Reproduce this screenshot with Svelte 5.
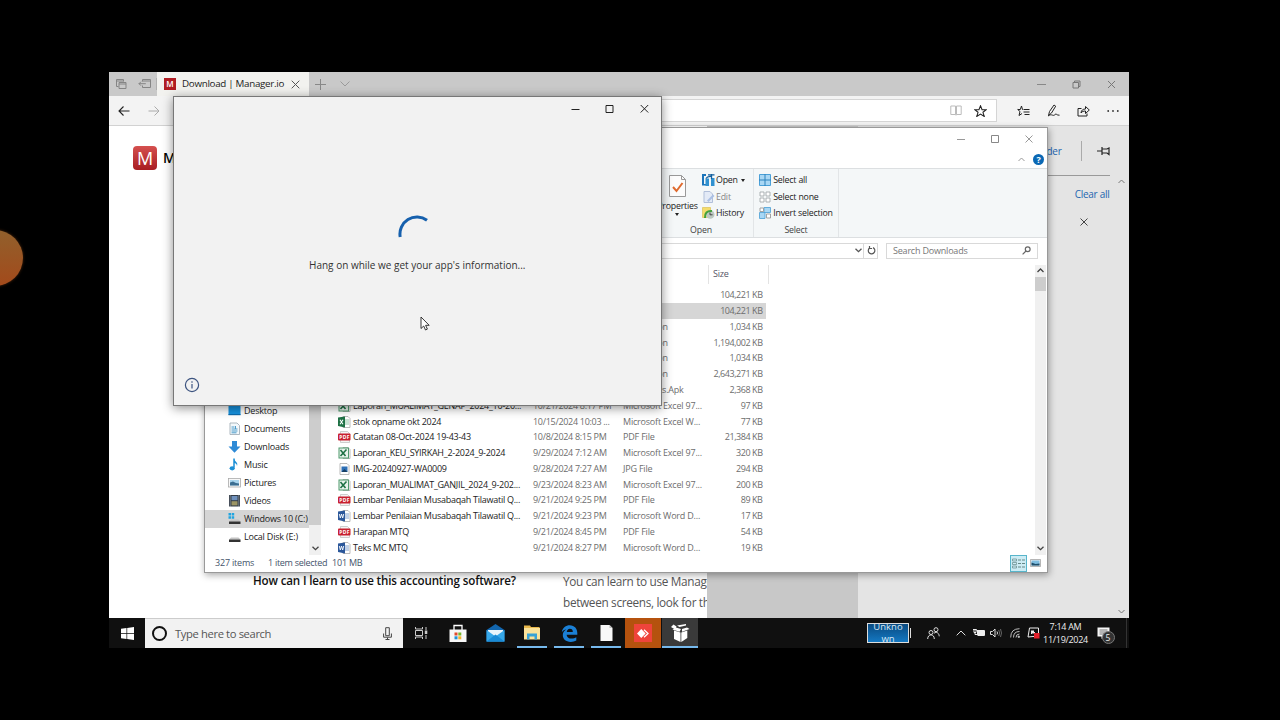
<script lang="ts">
	type FileRow = { name: string; icon: string; date: string; type: string; size: string; selected?: boolean };

	const files: FileRow[] = [
		{ name: '', icon: '', date: '', type: '', size: '104,221 KB' },
		{ name: '', icon: '', date: '', type: '', size: '104,221 KB', selected: true },
		{ name: '', icon: '', date: '', type: 'Application', size: '1,034 KB' },
		{ name: '', icon: '', date: '', type: 'Application', size: '1,194,002 KB' },
		{ name: '', icon: '', date: '', type: 'Application', size: '1,034 KB' },
		{ name: '', icon: '', date: '', type: 'Application', size: '2,643,271 KB' },
		{ name: '', icon: '', date: '', type: 'BlueStacks.Apk', size: '2,368 KB' },
		{ name: 'Laporan_MUALIMAT_GENAP_2024_10-20...', icon: 'xls', date: '10/21/2024 8:17 PM', type: 'Microsoft Excel 97...', size: '97 KB' },
		{ name: 'stok opname okt 2024', icon: 'xlsx', date: '10/15/2024 10:03 ...', type: 'Microsoft Excel W...', size: '77 KB' },
		{ name: 'Catatan 08-Oct-2024 19-43-43', icon: 'pdf', date: '10/8/2024 8:15 PM', type: 'PDF File', size: '21,384 KB' },
		{ name: 'Laporan_KEU_SYIRKAH_2-2024_9-2024', icon: 'xls', date: '9/29/2024 7:12 AM', type: 'Microsoft Excel 97...', size: '320 KB' },
		{ name: 'IMG-20240927-WA0009', icon: 'jpg', date: '9/28/2024 7:27 AM', type: 'JPG File', size: '294 KB' },
		{ name: 'Laporan_MUALIMAT_GANJIL_2024_9-202...', icon: 'xls', date: '9/23/2024 8:23 AM', type: 'Microsoft Excel 97...', size: '200 KB' },
		{ name: 'Lembar Penilaian Musabaqah Tilawatil Q...', icon: 'pdf', date: '9/21/2024 9:25 PM', type: 'PDF File', size: '89 KB' },
		{ name: 'Lembar Penilaian Musabaqah Tilawatil Q...', icon: 'doc', date: '9/21/2024 9:23 PM', type: 'Microsoft Word D...', size: '17 KB' },
		{ name: 'Harapan MTQ', icon: 'pdf', date: '9/21/2024 8:45 PM', type: 'PDF File', size: '54 KB' },
		{ name: 'Teks MC MTQ', icon: 'doc', date: '9/21/2024 8:27 PM', type: 'Microsoft Word D...', size: '19 KB' }
	];

	const places = ['Desktop', 'Documents', 'Downloads', 'Music', 'Pictures', 'Videos', 'Windows 10 (C:)', 'Local Disk (E:)'];
	const selectedPlace = 'Windows 10 (C:)';
</script>

{#snippet fileIcon(kind: string)}
	<svg class="file-icon" width="13" height="12" viewBox="0 0 13 12">
		{#if kind === 'pdf'}
			<path d="M2.5 .5h7l2 2v9h-9z" fill="#f4f4f4" stroke="#bbb" stroke-width=".7" />
			<rect x="0" y="2.500" width="12.5" height="7" rx="1" fill="#c8202f" />
			<text x="1.3" y="7.9" font-size="5" font-weight="700" fill="#fff" textLength="10">PDF</text>
		{:else if kind === 'jpg'}
			<path d="M2 .5h7l2 2v9H2z" fill="#fff" stroke="#aaa" stroke-width=".8" />
			<rect x="3.5" y="3.5" width="6" height="5.5" fill="#2d6fb5" />
			<path d="M3.5 9l3-3 3 3z" fill="#173f63" />
		{:else if kind}
			<path d="M5 .5h5l2 2v9H5z" fill="#fff" stroke="#aaa" stroke-width=".8" />
			<path d="M7 4h4M7 6h4M7 8h4" stroke={kind === 'doc' ? '#6a8fc4' : '#7ab893'} stroke-width=".8" />
			{#if kind === 'xls'}
				<rect x="1" y="1" width="9.5" height="10" fill="#e8f3ec" stroke="#4e9a6d" />
				<path d="M2.5 3l5 6M8.5 2.5l-6 6.5" stroke="#1e7145" stroke-width="1.6" />
			{:else}
				<path d="M0 1.5L7 .5v11L0 10z" fill={kind === 'doc' ? '#2b579a' : '#1e7145'} />
				{#if kind === 'doc'}
					<path d="M1.3 4l1 4 1.2-4 1.2 4 1-4" fill="none" stroke="#fff" stroke-width=".9" />
				{:else}
					<path d="M2 3.7l3 4.6M5 3.7L2 8.3" stroke="#fff" stroke-width="1.1" />
				{/if}
			{/if}
		{/if}
	</svg>
{/snippet}

{#snippet placeIcon(name: string)}
	<svg class="place-icon" width="13" height="13" viewBox="0 0 13 13">
		{#if name === 'Desktop'}
			<rect x=".5" y="2" width="12" height="9" fill="#1793e0" />
			<path d="M.5 10h12v1.2H.5z" fill="#0c6cae" />
		{:else if name === 'Documents'}
			<path d="M2 1h7l2.5 2.5V12.5H2z" fill="#f3f8fb" stroke="#9aa7b0" stroke-width=".8" />
			<path d="M3.5 5h3M3.5 7h6M3.5 9h6M3.5 10.8h5M7.5 4v3" stroke="#4b9bc9" />
		{:else if name === 'Downloads'}
			<path d="M4 1h5v5.5h3.5L6.5 12.8.5 6.5H4z" fill="#2e8ad6" />
		{:else if name === 'Music'}
			<path d="M6 .5v9" stroke="#1b8fd6" stroke-width="1.5" />
			<path d="M6 .5c.5 3 4.5 3.500 3 7.5C9 6 7.5 5 6 5z" fill="#1b8fd6" />
			<ellipse cx="4.2" cy="10.3" rx="2.6" ry="2.1" fill="#1b8fd6" />
		{:else if name === 'Pictures'}
			<rect x=".5" y="2.5" width="12" height="8.5" fill="#f8f8f8" stroke="#aaa" stroke-width=".8" />
			<path d="M2 4h9v5.5H2z" fill="#a9d5ee" />
			<path d="M2 9.5V6.500l3-1 3 1.500 3 .5v2z" fill="#3c6e92" />
		{:else if name === 'Videos'}
			<rect x="1" y="1" width="11" height="11.5" fill="#333c46" />
			<rect x="3.5" y="2" width="6" height="4.2" fill="#6f91bd" />
			<rect x="3.5" y="7.2" width="6" height="4.2" fill="#9c9564" />
			<path d="M2.2 1.5v11M10.8 1.5v11" stroke="#c6ced6" stroke-width=".9" stroke-dasharray="1 1" />
		{:else}
			<path d="M3 7.500h7.500l2 2H1z" fill="#c4c4c4" />
			<path d="M1 9.5h11.5v2.500H1z" fill="#333" />
			{#if name === selectedPlace}
				<path d="M.5 1h2.5v2.5H.5zM3.7 1h2.5v2.5H3.7zM.5 4.2h2.5v2.5H.5zM3.7 4.2h2.5v2.5H3.7z" fill="#22a5e0" />
			{/if}
		{/if}
	</svg>
{/snippet}

<div class="frame">
	<div class="bubble"></div>

	<div class="desktop">
		<div class="browser">
			<div class="tab-bar">
				<div class="tab-tools">
					<svg width="12" height="12" viewBox="0 0 12 12" fill="none" stroke="#858585"><path d="M3.5 8.5H1.5v-7h7v2M1.5 3h7M4 4.5h7v6H4zM4 6h7" /></svg>
					<svg width="14" height="12" viewBox="0 0 14 12" fill="none" stroke="#858585"><path d="M4.5 3.5v-2h8v8h-8v-2M4.5 3h8M.8 5.7h7M3 3.7l-2 2 2 2" /></svg>
				</div>
				<div class="tab">
					<span class="favicon">M</span>
					<span class="tab-title">Download | Manager.io</span>
					<svg width="9" height="9" viewBox="0 0 9 9" stroke="#555"><path d="M.7.7l7.6 7.6M8.3.7L.7 8.3" /></svg>
				</div>
				<svg class="new-tab" width="11" height="11" viewBox="0 0 11 11" stroke="#888"><path d="M0 5.5h11M5.5 0v11" /></svg>
				<svg width="10" height="6" viewBox="0 0 10 6" fill="none" stroke="#9a9a9a"><path d="M.5.5L5 5 9.5.5" /></svg>
				<div class="browser-controls">
					<svg width="9" height="9" viewBox="0 0 9 9" stroke="#888"><path d="M0 4.5h9" /></svg>
					<svg width="9" height="9" viewBox="0 0 9 9" fill="none" stroke="#777"><path d="M1 2.5h5.5V8H1zM2.5 2.5V1H8v5.5H6.5" /></svg>
					<svg width="9" height="9" viewBox="0 0 9 9" stroke="#777"><path d="M1 1l7 7M8 1L1 8" /></svg>
				</div>
			</div>
			<div class="nav-bar">
				<svg class="back" width="12" height="10" viewBox="0 0 12 10" fill="none" stroke="#222" stroke-width="1.1"><path d="M11.5 5H1M5.5.5L1 5l4.5 4.5" /></svg>
				<svg width="12" height="10" viewBox="0 0 12 10" fill="none" stroke="#aaa"><path d="M.5 5H11M6.5.5L11 5 6.5 9.5" /></svg>
				<div class="address">
					<svg width="12" height="11" viewBox="0 0 12 11" fill="none" stroke="#bbb"><path d="M.8 1h4.7v8.5H.8zM6.5 1h4.7v8.5H6.5zM6 1v9.5" /></svg>
					<svg width="13" height="12" viewBox="0 0 24 23" fill="none" stroke="#222" stroke-width="2"><path d="M12 1.5l3 7.5h8l-6.3 5 2.5 8L12 17.3 4.8 22l2.5-8L1 9h8z" /></svg>
				</div>
				<div class="nav-tools">
					<svg width="13" height="12" viewBox="0 0 13 12" fill="none" stroke="#222"><path d="M6.5 4.5H5.5L4.5 1 3.3 4.5H.7L3 6.5l-1 4 3-2M7 4.5h5.5M6.5 7h6M7.5 9.5h5" /></svg>
					<svg width="13" height="13" viewBox="0 0 13 13" fill="none" stroke="#222"><path d="M1.5 11.5l1-4L7 1l1.7 1.2L4.5 9zM1 12c4-3 5 1 7-1.5 1.5-1.5 1.5 1 4.5.7" /></svg>
					<svg width="13" height="12" viewBox="0 0 13 12" fill="none" stroke="#222"><path d="M4.5 3.5H1v7.5h9V8.5M4 8c.3-3 2-4 4.5-4V1.5L12.3 5 8.5 8.5V6C6.5 6 5 6.5 4 8z" /></svg>
					<svg width="12" height="4" viewBox="0 0 12 4" fill="#333"><circle cx="1.2" cy="2" r=".9" /><circle cx="6" cy="2" r=".9" /><circle cx="10.8" cy="2" r=".9" /></svg>
				</div>
			</div>
			<div class="browser-body">
				<div class="page">
					<div class="brand">
						<span class="logo">M</span>
						<span class="brand-name">Manager</span>
					</div>
					<div class="faq">
						<h2>How can I learn to use this accounting software?</h2>
						<p>You can learn to use Manager<br />between screens, look for the</p>
					</div>
				</div>
				<div class="shade"></div>
				<div class="hub">
					<div class="hub-top">
						<span class="link">Open folder</span>
						<span class="divider"></span>
						<svg width="13" height="10" viewBox="0 0 13 10" fill="none" stroke="#222" stroke-width="1.2"><path d="M0 5h5M5 1v8M5 3h5l2-1v6.500L10 7H5" /></svg>
					</div>
					<span class="link clear">Clear all</span>
					<svg class="hub-close" width="8" height="8" viewBox="0 0 8 8" stroke="#444"><path d="M.5.5l7 7M7.5.5l-7 7" /></svg>
				</div>
				<div class="hub-scroll">
					<svg width="7" height="5" viewBox="0 0 7 5" fill="none" stroke="#777"><path d="M.5 4l3-3 3 3" /></svg>
					<svg width="7" height="5" viewBox="0 0 7 5" fill="none" stroke="#777"><path d="M.5 1l3 3 3-3" /></svg>
				</div>
			</div>
		</div>

		<div class="explorer">
			<div class="explorer-title">
				<svg width="8" height="8" viewBox="0 0 8 8" stroke="#999"><path d="M0 4.5h8" /></svg>
				<svg width="8" height="8" viewBox="0 0 8 8" fill="none" stroke="#888"><path d="M.5.5h7v7h-7z" /></svg>
				<svg width="8" height="8" viewBox="0 0 8 8" stroke="#999"><path d="M.5.5l7 7M7.5.5l-7 7" /></svg>
			</div>
			<div class="explorer-menu">
				<svg width="7" height="5" viewBox="0 0 7 5" fill="none" stroke="#999"><path d="M.5 4l3-3 3 3" /></svg>
				<span class="help">?</span>
			</div>
			<div class="ribbon">
				<div class="group open-group">
					<div class="group-body">
						<div class="properties">
							<svg width="17" height="22" viewBox="0 0 17 22"><path d="M.5.5h12l4 4v17H.5z" fill="#fcfcfc" stroke="#999" /><path d="M12.5.5v4h4" fill="none" stroke="#999" /><path d="M4 12l3.5 4L13.5 8" fill="none" stroke="#df6a2e" stroke-width="2" /></svg>
							<span>Properties</span>
							<i class="caret"></i>
						</div>
						<div class="commands">
							<div class="command">
								<svg width="13" height="12" viewBox="0 0 13 12"><path d="M0 0h4v2H2v8h2v1.500H0z" fill="#1b75bb" /><path d="M3.500 4.500H7V12H3.500zM9 4h3.500v8H9z" fill="#3091d0" /><path d="M6 .8h6.500M4 4.500c1-2 3-2.500 6-2M9.500 0v5" fill="none" stroke="#125f9e" stroke-width="1.3" /></svg>
								<span>Open</span><i class="caret"></i>
							</div>
							<div class="command disabled">
								<svg width="13" height="12" viewBox="0 0 13 12"><path d="M2 .5h6l2.5 2.5v8.5H2z" fill="#e3eaf6" stroke="#b1bfd9" /><path d="M5 9.5l6-6 1.5 1.5-6 6z" fill="#abc0e4" /></svg>
								<span>Edit</span>
							</div>
							<div class="command">
								<svg width="13" height="12" viewBox="0 0 13 12"><path d="M.5.5h8v10h-8z" fill="#f4dc6c" stroke="#d6ba46" stroke-width=".6" /><circle cx="8.2" cy="7.5" r="4.3" fill="#bcc8c1" /><path d="M3 11c-.5-5 2-7.5 7-7" fill="none" stroke="#43a13c" stroke-width="2" /><path d="M8 5.5v2.3h2.5" stroke="#444" fill="none" /></svg>
								<span>History</span>
							</div>
						</div>
					</div>
					<span class="group-label">Open</span>
				</div>
				<div class="group select-group">
					<div class="commands">
						<div class="command">
							<svg width="12" height="12" viewBox="0 0 12 12"><path d="M.5.5h11v11H.5z" fill="#a9d7f4" stroke="#4aa0d8" /><path d="M6 0v12M0 6h12" stroke="#2c83bd" /></svg>
							<span>Select all</span>
						</div>
						<div class="command">
							<svg width="12" height="12" viewBox="0 0 12 12" fill="#fff" stroke="#a4a9ad" stroke-width=".9"><path d="M1 1h4v4H1zM7 1h4v4H7zM1 7h4v4H1zM7 7h4v4H7z" /></svg>
							<span>Select none</span>
						</div>
						<div class="command">
							<svg width="12" height="12" viewBox="0 0 12 12" fill="#a9d7f4" stroke="#58a6d8" stroke-width=".9"><path d="M5 .5h6.5v5H5zM.5 5.5h5.5v6H.5z" /><path d="M1 1h3.5v3.5H1zM7.5 7h4v4h-4z" fill="#fff" stroke="#999" /></svg>
							<span>Invert selection</span>
						</div>
					</div>
					<span class="group-label">Select</span>
				</div>
			</div>
			<div class="path-row">
				<div class="path-box">
					<svg width="7" height="5" viewBox="0 0 7 5" fill="none" stroke="#555" stroke-width="1.3"><path d="M.5.7l3 3 3-3" /></svg>
					<span class="refresh">
						<svg width="9" height="9" viewBox="0 0 9 9" fill="none" stroke="#555" stroke-width="1.2"><path d="M6 1.6A3.3 3.3 0 1 1 2.5 2M2.5 0v2.5H5" /></svg>
					</span>
				</div>
				<div class="search">
					<span>Search Downloads</span>
					<svg width="9" height="9" viewBox="0 0 9 9" fill="none" stroke="#666" stroke-width="1.2"><circle cx="5.7" cy="3.2" r="2.4" /><path d="M4 5L.6 8.4" /></svg>
				</div>
			</div>
			<div class="explorer-body">
				<div class="places">
					{#each places as place}
						<div class="place" class:selected={place === selectedPlace}>
							{@render placeIcon(place)}
							<span>{place}</span>
						</div>
					{/each}
				</div>
				<div class="places-scroll">
					<svg width="7" height="5" viewBox="0 0 7 5" fill="none" stroke="#444" stroke-width="1.3"><path d="M.5.7l3 3 3-3" /></svg>
				</div>
				<div class="file-list">
					<div class="list-head"><span class="size-head">Size</span></div>
					{#each files as file}
						<div class="file" class:selected={file.selected}>
							{@render fileIcon(file.icon)}
							<span class="name">{file.name}</span>
							<span class="date">{file.date}</span>
							<span class="type">{file.type}</span>
							<span class="size">{file.size}</span>
						</div>
					{/each}
				</div>
				<div class="list-scroll">
					<svg width="7" height="5" viewBox="0 0 7 5" fill="none" stroke="#444" stroke-width="1.3"><path d="M.5 4l3-3 3 3" /></svg>
					<div class="thumb"></div>
					<svg width="7" height="5" viewBox="0 0 7 5" fill="none" stroke="#444" stroke-width="1.3"><path d="M.5.7l3 3 3-3" /></svg>
				</div>
			</div>
			<div class="status">
				<span class="count">327 items</span>
				<span class="picked">1 item selected</span>
				<span>101 MB</span>
				<div class="views">
					<span class="details-view">
						<svg width="13" height="11" viewBox="0 0 13 11" fill="none" stroke="#688"><path d="M.5 1h4v2h-4zM.5 4.5h4v2h-4zM.5 8h4v2h-4z" stroke-width=".7" /><path d="M6 2h3M10 2h3M6 5.5h3M10 5.5h3M6 9h3M10 9h3" /></svg>
					</span>
					<svg width="11" height="8" viewBox="0 0 11 8"><path d="M.5.5h10v7H.5z" fill="#eee" stroke="#999" stroke-width=".7" /><path d="M1.5 1.5h8v5h-8z" fill="#7fbde0" /><path d="M1.5 6.5v-3l4 1.5 4-.5v2z" fill="#1f4f6b" /></svg>
				</div>
			</div>
		</div>

		<div class="dialog">
			<div class="dialog-title">
				<svg width="9" height="9" viewBox="0 0 9 9" stroke="#222"><path d="M.5 5.5h8" /></svg>
				<svg width="9" height="9" viewBox="0 0 9 9" fill="none" stroke="#222"><path d="M1 1.5h7v7H1z" /></svg>
				<svg width="9" height="9" viewBox="0 0 9 9" stroke="#222"><path d="M.7 1l7.5 7.5M8.2 1L.7 8.5" /></svg>
			</div>
			<div class="dialog-body">
				<svg width="38" height="38" viewBox="0 0 38 38" fill="none" stroke="#1660ad" stroke-width="3"><path d="M2.2 22A17 17 0 0 1 29 5.300" /></svg>
				<p>Hang on while we get your app's information...</p>
			</div>
			<svg class="info" width="16" height="16" viewBox="0 0 16 16" fill="none" stroke="#3d5480" stroke-width="1.2"><circle cx="8" cy="8" r="6.6" /><path d="M8 7v4.5M8 4.3v1.4" /></svg>
		</div>

		<svg class="cursor" width="10" height="16" viewBox="0 0 10 16"><path d="M1 1v11.5l2.7-2.5 1.8 4 1.9-.9L5.6 9.3h3.6z" fill="#fff" stroke="#222" stroke-width=".9" /></svg>

		<div class="taskbar">
			<div class="start">
				<svg width="13" height="13" viewBox="0 0 13 13" fill="#fff"><path d="M0 1.8l5.5-.8v5.2H0zM6.2.9L13 0v6.2H6.2zM0 6.9h5.5v5.2L0 11.3zM6.2 6.9H13V13l-6.8-.9z" /></svg>
			</div>
			<div class="task-search">
				<span class="cortana"></span>
				<span class="hint">Type here to search</span>
				<svg width="9" height="13" viewBox="0 0 9 13" fill="none" stroke="#444"><path d="M2.7.7h3.6v8H2.7zM.6 6.500v3.700h7.800V6.500M4.500 10.500v2M2.500 12.500h4" /></svg>
			</div>
			<div class="apps">
				<div class="app">
					<svg width="14" height="12" viewBox="0 0 14 12" fill="none" stroke="#ccc"><path d="M1.5 3.5h7v5h-7zM1.5 0v2h7V0M1.5 12v-2h7v2M12 0v3M12 8v4" /><rect x="11.3" y="4" width="1.5" height="2.5" fill="#fff" /></svg>
				</div>
				<div class="app">
					<svg width="18" height="19" viewBox="0 0 18 19"><path d="M5 6V1.5h8V6" fill="none" stroke="#fff" stroke-width="1.3" /><path d="M.5 5.5h17V18H.5z" fill="#f7f7f7" /><path d="M5.5 8.5h3v3h-3z" fill="#e24a2b" /><path d="M9.3 8.5h3v3h-3z" fill="#75b52c" /><path d="M5.5 12.3h3v3h-3z" fill="#1f91d8" /><path d="M9.3 12.3h3v3h-3z" fill="#f3b32c" /></svg>
				</div>
				<div class="app">
					<svg width="19" height="18" viewBox="0 0 19 18"><path d="M.5 6l9-6 9 6v11.5H.5z" fill="#1266ae" /><path d="M2 6h15v6H2z" fill="#e9f4fb" /><path d="M.5 6l9 6.5 9-6.5v11.5H.5z" fill="#36a7e8" /><path d="M.5 17.5l9-7 9 7z" fill="#198ad5" /></svg>
				</div>
				<div class="app running">
					<svg width="18" height="16" viewBox="0 0 18 16"><path d="M1 .5h6l1 1.5h8.5V14H1z" fill="#eab94c" /><path d="M1 3h16v11.5H1z" fill="#fbe29a" /><path d="M4 14.5v-6h10v6h-2.5v-3h-5v3z" fill="#39a2d5" /></svg>
				</div>
				<div class="app running">
					<svg width="17" height="17" viewBox="0 0 17 17"><path d="M.8 7.3C1.5 2.5 5 .3 8.7.3c5 0 7.6 3.7 7.6 7.8v1.7H5.7c.2 3 2.6 3.8 4.8 3.8 2 0 3.5-.5 4.8-1.3v3.3c-1.5.8-3.5 1.3-5.5 1.3-5 0-8-2.7-8-6.8 0-2.5 1.4-4.5 3.4-5.5C3.5 4.7 1.7 5.8.8 7.3zM5.8 7h6c0-2-1-3.2-2.9-3.2S6 5.2 5.8 7z" fill="#1b80d6" /></svg>
				</div>
				<div class="app running">
					<svg width="13" height="16" viewBox="0 0 13 16"><path d="M.5 0h9L12.5 3v13H.5z" fill="#f8f8f8" /><path d="M9.5 0v3h3z" fill="#bbb" /></svg>
				</div>
				<div class="app anydesk">
					<span><svg width="12" height="9" viewBox="0 0 12 9"><path d="M4.3 0l4.3 4.5L4.3 9 0 4.5z" fill="#fff" /><path d="M7 .7l4 3.8-4 3.8" fill="none" stroke="#fff" stroke-width="1.3" /></svg></span>
				</div>
				<div class="app running active">
					<svg width="19" height="18" viewBox="0 0 19 18" fill="#fff"><path d="M3 6.500l6.500 2V18L3 15zM10.300 8.500l6-2V14l-6 4zM0 3L2.500.5l3 2L4 5.500zM6 1.500L8.500 3 15 1.500V0L12 .5zM1.500 5.500L5 3.500 10 5 8.500 7.700zM11 5l5-1.500L18.500 5l-7.500 2.700z" /></svg>
				</div>
			</div>
			<div class="tray">
				<div class="battery"><span>Unkno<br />wn</span></div>
				<svg class="people" width="13" height="13" viewBox="0 0 13 13" fill="none" stroke="#ddd"><circle cx="4" cy="5.5" r="2" /><path d="M.7 12c0-5.5 6.6-5.5 6.6 0" /><circle cx="9" cy="2.7" r="2" /><path d="M7 6.3c2.5-2.3 5.2 0 5.2 3" /></svg>
				<svg class="more" width="10" height="6" viewBox="0 0 10 6" fill="none" stroke="#ddd"><path d="M.7 5.3L5 1l4.3 4.3" /></svg>
				<svg class="power" width="12" height="8" viewBox="0 0 12 8"><path d="M4 2h7v4H4z" fill="#eee" /><path d="M3.500 1.500h8v5h-7M0 .5h3.500M1 0v3.500h2V0M2 3.5v2h2M12 3v2" stroke="#eee" fill="none" /></svg>
				<svg class="volume" width="12" height="10" viewBox="0 0 12 10" fill="none" stroke="#ddd"><path d="M.5 3.5h2L5 1v8L2.5 6.5h-2zM7 3.5q1 1.500 0 3" /><path d="M8.7 2q2 3 0 6M10.5 1q2 4 0 8" stroke="#666" /></svg>
				<svg class="wifi" width="10" height="10" viewBox="0 0 10 10" fill="none" stroke="#bbb"><path d="M.7 9.5Q.7.7 9.5.7M3.5 9.5q0-6 6-6M6 9.5Q6 6 9.5 6" /><circle cx="8.8" cy="8.8" r=".8" fill="#ddd" /></svg>
				<svg class="alert" width="13" height="12" viewBox="0 0 13 12" fill="none" stroke="#eee"><path d="M2.5 1h9v8l-10.5 1zM4 7l2.5-2.5L9 7" /><rect x="4" y="3.5" width="3" height="3" fill="#eee" stroke="none" /><rect x="7" y="6" width="5.5" height="5.5" fill="#e3202b" stroke="none" /></svg>
				<div class="clock"><span>7:14 AM</span><span>11/19/2024</span></div>
				<div class="notices">
					<svg width="13" height="13" viewBox="0 0 13 13"><path d="M.5.5h12v9H7L4.5 12V9.5h-4z" fill="#f4f4f4" /><path d="M2.5 3h8M2.5 5h8M2.5 7h5" stroke="#555" stroke-width=".8" /></svg>
					<span class="badge">5</span>
				</div>
			</div>
		</div>
	</div>
</div>

<style>
	:global(body) {
		background: #000;
	}

	.frame {
		position: relative;
		box-sizing: border-box;
		width: 1280px;
		height: 720px;
		padding: 72px 0 0 109px;
		background: #000;
		overflow: hidden;
		font-family: "Open Sans", "Noto Sans", sans-serif;
		font-size: 9px;
		line-height: 12px;
		color: #222;
	}

	svg {
		display: block;
		flex: none;
	}

	span {
		white-space: nowrap;
	}

	.bubble {
		position: absolute;
		left: -33px;
		top: 230px;
		width: 56px;
		height: 56px;
		border-radius: 50%;
		background: linear-gradient(#91602c, #a34a1b);
		box-shadow: 0 0 3px #50280c;
	}

	.desktop {
		position: relative;
		width: 1019.5px;
		height: 576px;
		overflow: hidden;
		background: #fff;
	}

	/* browser */
	.browser {
		display: flex;
		flex-direction: column;
		height: 546px;
	}

	.tab-bar {
		display: flex;
		align-items: center;
		height: 24px;
		flex: none;
		background: #c9c9c9;
	}

	.tab-tools {
		display: flex;
		align-items: center;
		gap: 11px;
		width: 41px;
		padding-left: 6px;
		border-right: 1px solid #b0b0b0;
	}

	.tab {
		display: flex;
		align-items: center;
		box-sizing: border-box;
		width: 152px;
		height: 24px;
		padding-left: 7px;
		background: #f2f2ef;
	}

	.favicon {
		width: 12px;
		height: 12px;
		background: #b01c22;
		color: #fff;
		font-size: 8px;
		font-weight: 600;
		text-align: center;
	}

	.tab-title {
		width: 102px;
		margin: 0 7px 0 6px;
		font-size: 9.8px;
		letter-spacing: -0.3px;
	}

	.new-tab {
		margin: 0 14px 0 6px;
	}

	.browser-controls {
		display: flex;
		gap: 26px;
		margin-left: auto;
		padding-right: 13px;
	}

	.nav-bar {
		display: flex;
		align-items: center;
		height: 30px;
		flex: none;
		box-sizing: border-box;
		border-bottom: 1px solid #d2d2d2;
		background: #f3f3f3;
	}

	.back {
		margin: 0 18px 0 9px;
	}

	.address {
		display: flex;
		align-items: center;
		justify-content: flex-end;
		gap: 12px;
		box-sizing: border-box;
		width: 800px;
		height: 23px;
		margin-left: 37px;
		padding-right: 9px;
		border: 1px solid #d5d5d5;
		background: #fff;
	}

	.nav-tools {
		display: flex;
		align-items: center;
		gap: 17px;
		margin-left: 20px;
	}

	.browser-body {
		display: flex;
		flex: 1;
		overflow: hidden;
	}

	.page {
		display: flex;
		flex-direction: column;
		justify-content: space-between;
		width: 598px;
		overflow: hidden;
		background: #fff;
	}

	.brand {
		display: flex;
		align-items: center;
		gap: 6px;
		padding: 20px 0 0 24px;
	}

	.logo {
		width: 24px;
		height: 24px;
		border-radius: 4px;
		background: linear-gradient(#d5504f, #a81d22);
		color: #fff;
		font-size: 18px;
		line-height: 24px;
		text-align: center;
	}

	.brand-name {
		font-size: 14px;
		font-weight: 600;
		color: #000;
	}

	.faq {
		display: flex;
		align-items: flex-start;
		padding-left: 144px;
	}

	.faq h2 {
		flex: none;
		width: 310px;
		margin: 0;
		font-size: 11.6px;
		font-weight: 600;
		line-height: 20px;
		letter-spacing: -0.15px;
		color: #111;
	}

	.faq p {
		flex: none;
		margin: 0;
		padding-bottom: 5.5px;
		font-size: 11.8px;
		line-height: 21px;
		letter-spacing: -0.33px;
		color: #555;
		white-space: nowrap;
	}

	.shade {
		width: 151px;
		background: #c8c8c8;
	}

	.hub {
		display: flex;
		flex: 1;
		flex-direction: column;
		align-items: flex-end;
		background: #e4e4e4;
	}

	.hub-top {
		display: flex;
		align-items: center;
		justify-content: flex-end;
		width: 100%;
		height: 49px;
		border-bottom: 1px solid #999;
	}

	.link {
		color: #1d64b0;
		font-size: 10px;
		letter-spacing: -0.28px;
	}

	.divider {
		width: 1px;
		height: 20px;
		margin: 0 15px 0 19px;
		background: #aaa;
	}

	.clear {
		margin-top: 12px;
	}

	.hub-close {
		margin: 18px 22px 0 0;
	}

	.hub-scroll {
		display: flex;
		flex-direction: column;
		justify-content: space-between;
		align-items: center;
		box-sizing: border-box;
		width: 19px;
		padding: 53px 4px 4px 8px;
		background: #e4e4e4;
	}

	/* file explorer */
	.explorer {
		position: absolute;
		left: 95px;
		top: 55px;
		display: flex;
		flex-direction: column;
		box-sizing: border-box;
		width: 844px;
		height: 445.5px;
		border: 1px solid #999;
		background: #fff;
		box-shadow: 1px 2px 7px rgba(0, 0, 0, 0.35);
		letter-spacing: -0.2px;
	}

	.explorer-title {
		display: flex;
		align-items: center;
		justify-content: flex-end;
		gap: 26px;
		height: 22px;
		padding-right: 14px;
	}

	.explorer-menu {
		display: flex;
		align-items: center;
		justify-content: flex-end;
		gap: 8px;
		height: 18px;
		padding-right: 3px;
	}

	.help {
		width: 11px;
		height: 11px;
		border-radius: 50%;
		background: #0a68b4;
		color: #fff;
		font-weight: 700;
		line-height: 11px;
		text-align: center;
	}

	.ribbon {
		display: flex;
		box-sizing: border-box;
		height: 70px;
		padding-left: 444px;
		border-top: 1px solid #dcdfe1;
		border-bottom: 1px solid #dcdfe1;
		background: #f4f7f8;
		font-size: 8.8px;
	}

	.group {
		display: flex;
		flex-direction: column;
		justify-content: space-between;
		align-items: center;
		box-sizing: border-box;
		padding: 3px 0 1px;
		border-right: 1px solid #e2e5e7;
	}

	.open-group {
		width: 105px;
	}

	.select-group {
		width: 85px;
	}

	.group-body {
		display: flex;
		width: 100%;
	}

	.properties {
		display: flex;
		flex-direction: column;
		align-items: center;
		box-sizing: border-box;
		width: 53px;
		padding: 3px 0 0 3px;
	}

	.properties span {
		margin: 3px 0 1px 1px;
	}

	.caret {
		width: 0;
		height: 0;
		border: 2.5px solid transparent;
		border-top: 3px solid #222;
		border-bottom: 0;
	}

	.commands {
		display: flex;
		flex-direction: column;
	}

	.command {
		display: flex;
		align-items: center;
		gap: 2px;
		height: 16.5px;
	}

	.group-body .command {
		gap: 1px;
	}

	.command .caret {
		margin-left: 2px;
	}

	.disabled {
		color: #888;
	}

	.group-label {
		color: #444;
	}

	.path-row {
		display: flex;
		align-items: center;
		box-sizing: border-box;
		height: 27px;
		flex: none;
		padding-bottom: 2px;
		color: #777;
	}

	.path-box {
		display: flex;
		align-items: center;
		justify-content: flex-end;
		box-sizing: border-box;
		width: 645px;
		height: 16px;
		margin-left: 28px;
		border: 1px solid #d9d9d9;
	}

	.refresh {
		margin-left: 1px;
		padding: 3px 1px 3px 3px;
		border-left: 1px solid #d9d9d9;
	}

	.search {
		display: flex;
		align-items: center;
		justify-content: space-between;
		box-sizing: border-box;
		width: 152px;
		height: 16px;
		margin-left: 8px;
		padding: 0 6px 0 6px;
		border: 1px solid #d9d9d9;
	}

	.explorer-body {
		display: flex;
		flex: 1;
		min-height: 0;
		overflow: hidden;
	}

	.places {
		display: flex;
		flex-direction: column;
		justify-content: flex-end;
		box-sizing: border-box;
		width: 104px;
		padding-bottom: 9px;
	}

	.place {
		display: flex;
		align-items: center;
		gap: 3px;
		height: 18px;
		padding-left: 23px;
	}

	.place.selected {
		background: #d5d5d5;
	}

	.places-scroll {
		display: flex;
		flex-direction: column;
		justify-content: flex-end;
		align-items: center;
		box-sizing: border-box;
		width: 12px;
		padding-bottom: 4px;
		background: linear-gradient(#cdcdcd 260px, #f0f0f0 260px);
	}

	.file-list {
		width: 714px;
		padding-left: 17px;
		box-sizing: border-box;
	}

	.list-head {
		display: flex;
		height: 22.5px;
		padding-left: 370px;
	}

	.size-head {
		box-sizing: border-box;
		width: 61px;
		height: 19px;
		padding: 3px 0 0 4px;
		border: 1px solid #e3e3e3;
		border-width: 0 1px;
		color: #556;
	}

	.file {
		display: flex;
		align-items: center;
		width: 428px;
		height: 15.77px;
		color: #6d6d6d;
	}

	.file.selected {
		background: #d6d6d6;
	}

	.file-icon {
		margin-right: 2px;
	}

	.file .name {
		width: 180px;
		color: #222;
		letter-spacing: -0.26px;
	}

	.file .date {
		width: 90px;
		letter-spacing: -0.3px;
	}

	.file .type {
		width: 80px;
	}

	.file .size {
		width: 59.5px;
		letter-spacing: -0.45px;
		text-align: right;
	}

	.list-scroll {
		display: flex;
		flex-direction: column;
		align-items: center;
		width: 11px;
		padding: 3px 0 4px;
		background: #f0f0f0;
	}

	.thumb {
		width: 11px;
		height: 14px;
		margin: 4px 0 auto;
		background: #cdcdcd;
	}

	.status {
		display: flex;
		align-items: center;
		height: 17px;
		flex: none;
		padding-left: 10px;
		color: #44546a;
	}

	.count {
		width: 53px;
	}

	.picked {
		width: 64px;
		letter-spacing: -0.28px;
	}

	.views {
		display: flex;
		align-items: center;
		gap: 3px;
		margin-left: auto;
		padding-right: 6px;
	}

	.details-view {
		padding: 2px 1px;
		border: 1px solid #58b5cb;
		background: #cdecf4;
	}

	/* installer dialog */
	.dialog {
		position: absolute;
		left: 64px;
		top: 24px;
		display: flex;
		flex-direction: column;
		box-sizing: border-box;
		width: 488.5px;
		height: 310px;
		border: 1px solid #777;
		background: #f2f2f2;
		box-shadow: 0 2px 10px rgba(0, 0, 0, 0.45);
	}

	.dialog-title {
		display: flex;
		justify-content: flex-end;
		gap: 25.5px;
		padding: 7px 12px 0 0;
	}

	.dialog-body {
		display: flex;
		flex: 1;
		flex-direction: column;
		align-items: center;
		padding-top: 102px;
	}

	.dialog-body p {
		margin: 5px 0 0;
		font-size: 10px;
		line-height: 14px;
		color: #333;
	}

	.info {
		margin: 0 0 12px 10px;
	}

	.cursor {
		position: absolute;
		left: 311px;
		top: 244px;
	}

	/* taskbar */
	.taskbar {
		display: flex;
		height: 30px;
		background: #101010;
	}

	.start {
		display: flex;
		align-items: center;
		justify-content: center;
		width: 36px;
	}

	.task-search {
		display: flex;
		align-items: center;
		box-sizing: border-box;
		width: 258px;
		padding: 0 11px 0 7px;
		border-top: 1px solid #ccc;
		background: #f2f2f2;
	}

	.cortana {
		box-sizing: border-box;
		width: 15px;
		height: 15px;
		border: 2.2px solid #111;
		border-radius: 50%;
	}

	.hint {
		flex: 1;
		margin-left: 8px;
		font-size: 11.2px;
		letter-spacing: -0.36px;
		color: #555;
	}

	.apps {
		display: flex;
		gap: 1px;
	}

	.app {
		display: flex;
		align-items: center;
		justify-content: center;
		box-sizing: border-box;
		width: 36px;
		height: 30px;
	}

	.running {
		position: relative;
	}

	.running::after {
		content: "";
		position: absolute;
		left: 3px;
		right: 3px;
		bottom: 0;
		height: 2px;
		background: #76b9ed;
	}

	.anydesk {
		background: #b5520e;
	}

	.anydesk span {
		display: flex;
		align-items: center;
		justify-content: center;
		width: 18px;
		height: 18px;
		background: #ef443b;
	}

	.active {
		background: #3a3a3a;
	}

	.active::after {
		left: 0;
		right: 0;
	}

	.tray {
		display: flex;
		align-items: center;
		margin-left: auto;
		color: #eee;
	}

	.battery {
		position: relative;
		width: 40px;
		height: 18px;
		border: 1px solid #ddd;
		background: linear-gradient(#0a4a80, #1478c2);
	}

	.battery span {
		display: flex;
		align-items: center;
		justify-content: center;
		height: 18px;
		overflow: hidden;
		font-size: 9.5px;
		line-height: 12px;
		text-align: center;
		color: #d8e8f4;
	}

	.battery::after {
		content: "";
		position: absolute;
		right: -3px;
		top: 4px;
		width: 1px;
		height: 10px;
		background: #ddd;
	}

	.people {
		margin-left: 18px;
	}

	.more {
		margin-left: 15.5px;
	}

	.power {
		margin-left: 7px;
	}

	.volume {
		margin-left: 5px;
	}

	.wifi {
		margin-left: 8px;
	}

	.alert {
		margin-left: 7px;
	}

	.clock {
		display: flex;
		flex-direction: column;
		align-items: center;
		width: 52px;
		padding-bottom: 1px;
		line-height: 13px;
		letter-spacing: -0.3px;
	}

	.notices {
		position: relative;
		box-sizing: border-box;
		width: 31px;
		height: 30px;
		margin: 0 2px 0 4px;
		padding: 9px 0 0 1px;
		border-right: 1px solid #333;
	}

	.badge {
		position: absolute;
		left: 6px;
		top: 13px;
		width: 11px;
		height: 11px;
		border-radius: 50%;
		border: 1px solid #777;
		background: #333;
		font-size: 8.5px;
		line-height: 11px;
		text-align: center;
	}
</style>
